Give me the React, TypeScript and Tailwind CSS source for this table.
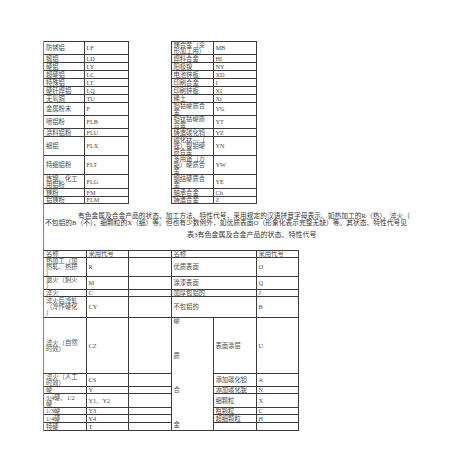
import React from "react";

type TopRow = [number, string[], string, string[], string];
const topRows: TopRow[] = [
  [12, ["防锈铝"], "LF", ["镁合金（变", "形加工用）"], "MB"],
  [8, ["锻铝"], "LD", ["焊料合金"], "HI"],
  [8, ["硬铝"], "LY", ["阳极镍"], "NY"],
  [8, ["超硬铝"], "LC", ["电池锌板"], "XD"],
  [8, ["特殊铝"], "LT", ["印刷合金"], "I"],
  [8, ["硬钎焊铝"], "LQ", ["印刷锌板"], "XI"],
  [8, ["无氧铜"], "TU", ["稀土"], "Xt"],
  [13, ["金属粉末"], "F", ["钨钴硬质合", "金"], "YG"],
  [13, ["喷铝粉"], "FLB", ["钨钛钴硬质", "合金"], "YT"],
  [8, ["涂料铝粉"], "FLU", ["铸造碳化钨"], "YZ"],
  [18, ["细铝"], "FLX", ["碳化钛—（", "铁）镍钼硬", "质合金"], "YN"],
  [19, ["特细铝粉"], "FLT", ["多用途（万", "能）硬质合", "金"], "YW"],
  [14, ["炼钢、化工", "用铝粉"], "FLG", ["钢结硬质合", "金"], "YE"],
  [8, ["镁粉"], "FM", ["轴承合金"], "Ch"],
  [7, ["铝镁粉"], "FLM", ["铸造合金"], "Z"],
];

const upperRows: TopRow[] = [
  [19, ["热加工（加", "热轧、热挤", "）"], "R", ["优质表面"], "O"],
  [12, ["退火（焖火", "）"], "M", ["涂漆表面"], "Q"],
  [7, ["淬火"], "C", ["加厚包铝的"], "J"],
  [21, ["淬火后冷轧", "（冷作硬化", "）"], "CY", ["不包铝的"], "B"],
];

type LowRow = [number, string[], string, string, string];
const lowerRows: LowRow[] = [
  [56, ["淬火（自然", "时效）"], "CZ", "表面涂层", "U"],
  [12, ["淬火（人工", "时效）"], "CS", "添加碳化钽", "A"],
  [7, ["硬"], "Y", "添加碳化铌", "N"],
  [14, ["3/4硬、1/2", "硬"], "Y1、Y2", "细颗粒", "X"],
  [7, ["1/3硬"], "Y3", "粗颗粒", "C"],
  [8, ["1/4硬"], "Y4", "超细颗粒", "H"],
  [8, ["特硬"], "T", "", ""],
];

const cell =
  "border border-[#3c3c3c] pl-[2px] pr-0 py-0 align-middle whitespace-nowrap overflow-hidden text-left";
const first =
  "border border-l-0 border-[#3c3c3c] pl-[2px] pr-0 py-0 align-middle whitespace-nowrap overflow-hidden text-left";

function Lines({ lines }: { lines: string[] }) {
  return (
    <>
      {lines.map((l, i) => (
        <div key={i}>{l}</div>
      ))}
    </>
  );
}

export default function App() {
  return (
    <div className="w-[474px] h-[474px] bg-white overflow-hidden text-[#4a4a4a] font-['Liberation_Serif','Noto_Sans_CJK_SC',serif]">
      <div className="pt-[41px] pl-[43px]">
        <div className="border-l border-[#e05a5a]">
          {/* Top table */}
          <table className="table-fixed border-collapse w-[212px] text-[6.3px] leading-[6px]">
            <colgroup>
              <col className="w-[40px]" />
              <col className="w-[44px]" />
              <col className="w-[43px]" />
              <col className="w-[42px]" />
              <col className="w-[43px]" />
            </colgroup>
            <tbody>
              {topRows.map(([h, a, b, c, d], i) => (
                <tr key={i} style={{ height: h }}>
                  <td className={first}>
                    <Lines lines={a} />
                  </td>
                  <td className={cell}>{b}</td>
                  <td className="border-0 p-0"></td>
                  <td className={cell}>
                    <Lines lines={c} />
                  </td>
                  <td className={cell}>{d}</td>
                </tr>
              ))}
            </tbody>
          </table>

          {/* Paragraph */}
          <div className="mt-[7.5px] text-[6.75px] leading-[7px] whitespace-nowrap text-[#333]">
            <div className="pl-[34px]">
              有色金属及合金产品的状态、加工方法、特性代号，采用规定的汉语拼音字母表示。如热加工的R（热）、淬火（
            </div>
            <div className="pl-[1px]">
              不包铝的B（不）、细颗粒的X（细）等。但也有少数例外，如优质表面O（形象化表示完整无缺）等。其状态、特性代号见
            </div>
          </div>

          {/* Title */}
          <div className="mt-[6.5px] pl-[143px] text-[7px] leading-[7px] whitespace-nowrap text-[#333]">
            表3有色金属及合金产品的状态、特性代号
          </div>

          {/* Bottom table */}
          <table className="mt-[11px] table-fixed border-collapse w-[254px] text-[6.3px] leading-[6px]">
            <colgroup>
              <col className="w-[42px]" />
              <col className="w-[42px]" />
              <col className="w-[43px]" />
              <col className="w-[42px]" />
              <col className="w-[43px]" />
              <col className="w-[42px]" />
            </colgroup>
            <tbody>
              <tr style={{ height: 7 }}>
                <td className={first}>名称</td>
                <td className={cell}>采用代号</td>
                <td className={cell}></td>
                <td className={cell} colSpan={2}>
                  名称
                </td>
                <td className={cell}>采用代号</td>
              </tr>
              {upperRows.map(([h, a, b, c, d], i) => (
                <tr key={i} style={{ height: h }}>
                  <td className={first}>
                    <Lines lines={a} />
                  </td>
                  <td className={cell}>{b}</td>
                  <td className={cell}></td>
                  <td className={cell} colSpan={2}>
                    <Lines lines={c} />
                  </td>
                  <td className={cell}>{d}</td>
                </tr>
              ))}
              {lowerRows.map(([h, a, b, c, d], i) => (
                <tr key={"l" + i} style={{ height: h }}>
                  <td className={first}>
                    <Lines lines={a} />
                  </td>
                  <td className={cell}>{b}</td>
                  <td className={cell}></td>
                  {i === 0 && (
                    <td
                      rowSpan={7}
                      className="border border-[#3c3c3c] p-0 align-top"
                    >
                      <div className="h-[110px] pl-[2px] flex flex-col justify-between">
                        <span>硬</span>
                        <span>质</span>
                        <span>合</span>
                        <span>金</span>
                      </div>
                    </td>
                  )}
                  <td className={cell}>{c}</td>
                  <td className={cell}>{d}</td>
                </tr>
              ))}
            </tbody>
          </table>
        </div>
      </div>
    </div>
  );
}
